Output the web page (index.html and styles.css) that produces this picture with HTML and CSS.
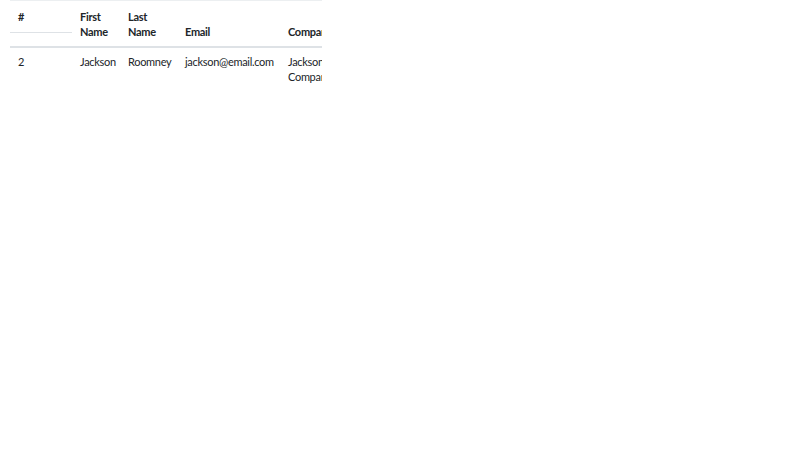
FILE: index.html
```html
<!DOCTYPE html>
<html>
<head>
<meta charset="utf-8">
<link rel="stylesheet" href="styles.css">
</head>
<body>
<div class="clip">
  <table class="grid">
    <colgroup>
      <col class="c-num"><col class="c-first"><col class="c-last"><col class="c-email"><col class="c-company">
    </colgroup>
    <thead>
      <tr>
        <th class="num-head">#</th>
        <th rowspan="2" class="bottom">First Name</th>
        <th rowspan="2" class="bottom">Last Name</th>
        <th rowspan="2" class="bottom">Email</th>
        <th rowspan="2" class="bottom">Company</th>
      </tr>
      <tr>
        <th class="spacer"></th>
      </tr>
    </thead>
    <tbody>
      <tr>
        <td>2</td>
        <td>Jackson</td>
        <td>Roomney</td>
        <td>jackson@email.com</td>
        <td>Jackson Company</td>
      </tr>
    </tbody>
  </table>
</div>
</body>
</html>
```
FILE: styles.css
```css
html, body {
  margin: 0;
  background: #fff;
}
body {
  font-family: Lato, "Noto Sans", sans-serif;
  font-size: 11px;
  line-height: 15px;
  letter-spacing: -0.3px;
  color: #212529;
}
.clip {
  margin-left: 10px;
  width: 312px;
  overflow: hidden;
}
.grid {
  border-collapse: collapse;
  table-layout: fixed;
  width: 340px;
  border-top: 1px solid #eceff1;
}
.c-num { width: 62px; }
.c-first { width: 48px; }
.c-last { width: 57px; }
.c-email { width: 103px; }
.c-company { width: 70px; }
th, td {
  text-align: left;
  padding: 7.5px 8px;
  vertical-align: top;
}
th {
  font-weight: 700;
}
th.num-head {
  padding-bottom: 8px;
  border-bottom: 1px solid #dee2e6;
}
th.bottom {
  vertical-align: bottom;
  padding-bottom: 7px;
  border-bottom: 2px solid #dee2e6;
}
th.spacer {
  padding: 7px 8px 6px;
  border-bottom: 2px solid #dee2e6;
}
td {
  padding-top: 6px;
  padding-bottom: 8px;
}
```
